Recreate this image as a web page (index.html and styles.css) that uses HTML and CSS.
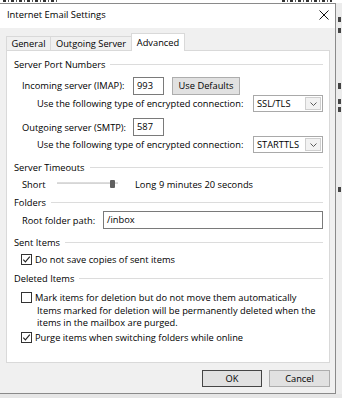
FILE: index.html
```html
<!DOCTYPE html>
<html>
<head>
<meta charset="utf-8">
<link rel="stylesheet" href="styles.css">
</head>
<body>
<div class="desk">
  <div class="bg-top"><span class="frag frag-a"></span><span class="frag frag-b"></span></div>
  <div class="stage">
    <div class="dialog">
      <div class="titlebar">
        <span class="title">Internet Email Settings</span>
        <svg class="close" viewBox="0 0 10 10"><path d="M0.5 0.5 L9.5 9.5 M9.5 0.5 L0.5 9.5" stroke="#111" stroke-width="1" fill="none"/></svg>
      </div>
      <div class="body">
        <div class="tabs">
          <div class="tab tab-general">General</div>
          <div class="tab tab-outgoing">Outgoing Server</div>
          <div class="tab active">Advanced</div>
        </div>
        <div class="panel">
          <div class="group">Server Port Numbers</div>
          <div class="row r-port">
            <span class="lbl-port">Incoming server (IMAP):</span>
            <span class="field field-port">993</span>
            <span class="btn-defaults">Use Defaults</span>
          </div>
          <div class="row r-enc">
            <span>Use the following type of encrypted connection:</span>
            <span class="select"><span class="select-text">SSL/TLS</span><span class="select-arrow"><svg viewBox="0 0 7 4" class="chev"><polyline points="0.5,0.5 3.5,3.5 6.5,0.5" fill="none" stroke="#5a5a5a" stroke-width="1"/></svg></span></span>
          </div>
          <div class="row r-port r-port2">
            <span class="lbl-port">Outgoing server (SMTP):</span>
            <span class="field field-port">587</span>
          </div>
          <div class="row r-enc">
            <span>Use the following type of encrypted connection:</span>
            <span class="select"><span class="select-text">STARTTLS</span><span class="select-arrow"><svg viewBox="0 0 7 4" class="chev"><polyline points="0.5,0.5 3.5,3.5 6.5,0.5" fill="none" stroke="#5a5a5a" stroke-width="1"/></svg></span></span>
          </div>
          <div class="group g-timeouts">Server Timeouts</div>
          <div class="row r-slider">
            <span class="lbl-short">Short</span>
            <span class="slider"><span class="thumb"></span></span>
            <span class="lbl-long">Long</span>
            <span>9 minutes 20 seconds</span>
          </div>
          <div class="group g-folders">Folders</div>
          <div class="row r-folder">
            <span class="lbl-folder">Root folder path:</span>
            <span class="field field-wide">/inbox</span>
          </div>
          <div class="group g-sent">Sent Items</div>
          <div class="row r-check r-check1">
            <span class="check on"><svg viewBox="0 0 9 9"><polyline points="1.3,4.6 3.4,6.9 7.8,1.6" fill="none" stroke="#222" stroke-width="1.1"/></svg></span>
            <span class="check-label">Do not save copies of sent items</span>
          </div>
          <div class="group g-deleted">Deleted Items</div>
          <div class="row r-check r-check2">
            <span class="check"></span>
            <span class="check-label">Mark items for deletion but do not move them automatically</span>
          </div>
          <div class="note">Items marked for deletion will be permanently deleted when the<br>items in the mailbox are purged.</div>
          <div class="row r-check r-check3">
            <span class="check on"><svg viewBox="0 0 9 9"><polyline points="1.3,4.6 3.4,6.9 7.8,1.6" fill="none" stroke="#222" stroke-width="1.1"/></svg></span>
            <span class="check-label">Purge items when switching folders while online</span>
          </div>
        </div>
        <div class="buttons">
          <span class="btn btn-ok">OK</span>
          <span class="btn btn-cancel">Cancel</span>
        </div>
      </div>
    </div>
    <div class="bg-right">
      <span class="mark m1"></span>
      <span class="mark m2"></span>
      <span class="mark m3"></span>
      <span class="mark m4"></span>
      <span class="mark m5"></span>
      <span class="mark m6"></span>
    </div>
  </div>
</div>
</body>
</html>
```

FILE: styles.css
```css
* { box-sizing: border-box; margin: 0; padding: 0; }
html, body { width: 342px; height: 398px; overflow: hidden; }
body {
  font-family: "Open Sans", "Noto Sans", sans-serif;
  font-size: 9.3px;
  color: #000;
  background: #e6e6e6;
}
.desk { width: 342px; height: 398px; display: flex; flex-direction: column; overflow: hidden; }

.bg-top { height: 3px; flex: none; overflow: hidden; background: #fff; display: flex; }
.frag {
  display: block; height: 2px;
  background: repeating-linear-gradient(to right, #333 0 3px, transparent 3px 5px, #555 5px 6px, transparent 6px 8px);
}
.frag-a { width: 55px; margin-left: 3px; }
.frag-b { width: 50px; margin-left: auto; margin-right: 10px; }

.stage { display: flex; height: 391px; flex: none; }

.dialog {
  width: 337px; height: 391px; flex: none;
  margin-left: -1px;
  border: 1px solid #8a8a8a;
  background: #f0f0f0;
  display: flex; flex-direction: column;
}
.titlebar { height: 24px; flex: none; background: #fff; display: flex; align-items: flex-start; }
.title { padding: 4px 0 0 7px; line-height: 14px; font-size: 9.4px; }
.close { width: 10px; height: 10px; margin: 6px 6px 0 auto; display: block; }

.body { flex: 1; padding: 5px 5px 0 6px; display: flex; flex-direction: column; }

.tabs { display: flex; align-items: flex-end; height: 17px; flex: none; }
.tab {
  height: 14px; line-height: 13px; text-align: center;
  border: 1px solid #d9d9d9; border-bottom: none; border-right: none;
  background: #f0f0f0; white-space: nowrap;
}
.tab-general { width: 44px; }
.tab-outgoing { width: 81px; }
.tab.active {
  width: 54px; height: 18px; padding-top: 2px;
  border-right: 1px solid #d9d9d9;
  background: #fff; margin-bottom: -1px;
  position: relative; z-index: 1;
}

.panel {
  width: 324px; height: 313px; flex: none;
  background: #fff; border: 1px solid #d9d9d9;
  padding: 6px 6px 0 7px;
  display: flex; flex-direction: column;
}
.group { display: flex; align-items: center; height: 14px; flex: none; white-space: nowrap; }
.group::after { content: ""; flex: 1; height: 1px; background: #dcdcdc; margin-left: 5px; }
.g-timeouts { margin-top: 7px; }
.g-folders { margin-top: 4px; }
.g-sent { margin-top: 6px; }
.g-deleted { margin-top: 4px; }

.row { display: flex; align-items: center; flex: none; white-space: nowrap; }
.r-port { height: 19px; margin-top: 5px; padding-left: 8px; }
.r-port2 { height: 18px; margin-top: 6px; }
.lbl-port { width: 111px; }
.field { height: 18px; border: 1px solid #7a7a7a; background: #fff; padding-left: 3px; line-height: 16px; display: block; }
.field-port { width: 31px; }
.btn-defaults {
  margin-left: 8px; width: 68px; height: 18px;
  background: #e1e1e1; border: 1px solid #adadad;
  display: flex; align-items: center; justify-content: center;
}

.r-enc { height: 17px; padding-left: 23px; }
.select {
  margin-left: auto; width: 70px; height: 17px;
  border: 1px solid #a9a9a9; background: #fff;
  display: flex; align-items: stretch; padding: 1px;
}
.select-text { flex: 1; padding-left: 2px; line-height: 13px; }
.select-arrow {
  width: 16px; border: 1px solid #cfcfcf; background: #f2f2f2;
  display: flex; align-items: center; justify-content: center;
}
.chev { width: 7px; height: 4px; display: block; }

.r-slider { height: 14px; margin-top: 3px; padding-left: 8px; }
.lbl-short { width: 35px; }
.slider {
  width: 61px; height: 10px; display: flex; align-items: center;
  background: linear-gradient(to bottom, transparent 3px, #e0e0e0 3px, #d2d2d2 5px, transparent 5px);
}
.thumb { width: 5px; height: 8px; margin-left: 53px; background: #606060; border-radius: 1px; display: block; }
.lbl-long { width: 24px; margin-left: 17px; }

.r-folder { height: 18px; margin-top: 2px; padding-left: 8px; }
.lbl-folder { width: 81px; }
.field-wide { flex: 1; }

.r-check { height: 15px; padding-left: 7px; }
.r-check1 { margin-top: 3px; }
.r-check2 { margin-top: 5px; }
.r-check3 { height: 16px; }
.check {
  width: 11px; height: 11px; border: 1px solid #333; background: #fff;
  display: flex; align-items: center; justify-content: center; flex: none;
}
.check svg { width: 9px; height: 9px; display: block; }
.check-label { margin-left: 3px; }

.note { height: 24px; line-height: 12px; padding-left: 23px; white-space: nowrap; flex: none; }

.buttons { display: flex; justify-content: flex-end; gap: 7px; margin-top: 7px; }
.btn {
  height: 17px; background: #e1e1e1; border: 1px solid #adadad;
  display: flex; align-items: center; justify-content: center;
}
.btn-ok { width: 60px; border-color: #454545; }
.btn-cancel { width: 61px; }

.bg-right {
  flex: 1; display: flex; flex-direction: column; overflow: hidden;
  background: #ececec; padding-left: 2px;
}
.mark { display: block; width: 3px; height: 5px; background: #444; }
.m1 { margin-top: 14px; }
.m2 { margin-top: 6px; }
.m3 { margin-top: 50px; height: 6px; }
.m4 { margin-top: 10px; }
.m5 { margin-top: 3px; }
.m6 { margin-top: 75px; }
```
